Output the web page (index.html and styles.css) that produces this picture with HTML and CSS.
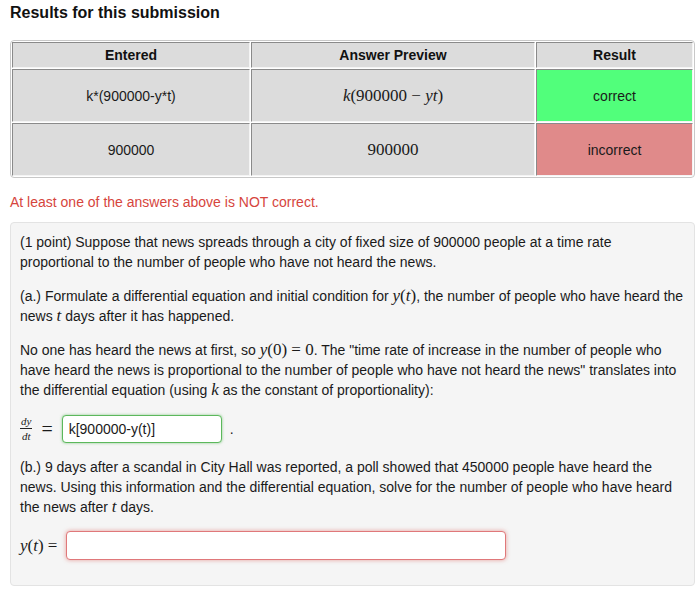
FILE: index.html
```html
<!DOCTYPE html>
<html lang="en">

<head>
  <meta charset="UTF-8" />
  <title>Results for this submission</title>
  <link rel="stylesheet" href="styles.css">
</head>

<body>

  <div class="page">
    <h3 class="results-title">Results for this submission</h3>

    <table class="attempt-results">
      <tr>
        <th class="col-entered">Entered</th>
        <th class="col-preview">Answer Preview</th>
        <th class="col-result">Result</th>
      </tr>
      <tr>
        <td>k*(900000-y*t)</td>
        <td class="math-cell"><span class="mi">k</span>(900000 &minus; <span class="mi">yt</span>)</td>
        <td class="result correct">correct</td>
      </tr>
      <tr>
        <td>900000</td>
        <td class="math-cell">900000</td>
        <td class="result incorrect">incorrect</td>
      </tr>
    </table>

    <p class="attempt-message">At least one of the answers above is NOT correct.</p>

    <div class="problem">
      <p>(1 point) Suppose that news spreads through a city of fixed size of 900000 people at a time rate
        proportional to the number of people who have not heard the news.</p>

      <p>(a.) Formulate a differential equation and initial condition for
        <span class="math"><span class="mi">y</span>(<span class="mi">t</span>)</span>, the number of people who have heard the
        news <span class="math mi">t</span> days after it has happened.</p>

      <p>No one has heard the news at first, so <span class="math"><span class="mi">y</span>(0) = 0</span>. The "time rate of increase in the number of people who
        have heard the news is proportional to the number of people who have not heard the news" translates into
        the differential equation (using <span class="math mi">k</span> as the constant of proportionality):</p>

      <div class="answer-row">
        <span class="frac">
          <span class="num">dy</span>
          <span class="den">dt</span>
        </span>
        <span class="math eq">=</span>
        <input type="text" class="answer answer-correct" value="k[900000-y(t)]" size="20">
        <span class="period">.</span>
      </div>

      <p>(b.) 9 days after a scandal in City Hall was reported, a poll showed that 450000 people have heard the
        news. Using this information and the differential equation, solve for the number of people who have heard
        the news after <span class="math mi">t</span> days.</p>

      <div class="answer-row">
        <span class="math"><span class="mi">y</span>(<span class="mi">t</span>) =</span>
        <input type="text" class="answer answer-wrong wide" value="">
      </div>
    </div>
  </div>

</body>

</html>
```

FILE: styles.css
```css
body {
  margin: 0;
  background-color: #fff;
  color: #1a1a1a;
  font-family: "Liberation Sans", Arial, sans-serif;
  font-size: 14px;
}

.page {
  padding: 3px 5px 8px 10px;
}

.results-title {
  margin: 0;
  font-size: 16px;
  line-height: 20px;
  font-weight: bold;
  color: #111;
}

.attempt-results {
  width: 685px;
  margin-top: 17px;
  border: 1px solid #c8c8c8;
  border-radius: 4px;
  border-spacing: 1px;
  background-color: #fff;
}

.attempt-results th,
.attempt-results td {
  background-color: #dcdcdc;
  text-align: center;
  border-style: solid;
  border-width: 1px;
  border-color: #8a8a8a #f4f4f4 #f4f4f4 #8a8a8a;
  padding: 2px 5px;
}

.attempt-results th {
  height: 20px;
  font-weight: bold;
  color: #111;
}

.attempt-results td {
  height: 47px;
  color: #1a1a1a;
}

.col-entered {
  width: 226px;
}

.col-preview {
  width: 272px;
}

.math-cell {
  font-family: "Liberation Serif", "Times New Roman", serif;
  font-size: 17px;
}

.result {
  color: #1c2a96;
}

.result.correct {
  background-color: #51ff7b;
}

.result.incorrect {
  background-color: #e08a8a;
}

.attempt-message {
  margin: 14px 0 10px;
  line-height: 20px;
  color: #d6453d;
}

.problem {
  background-color: #f5f5f5;
  border: 1px solid #e3e3e3;
  border-radius: 4px;
  padding: 9px 9px 11px;
}

.problem p {
  margin: 0 0 14px;
  line-height: 20px;
}

.math {
  font-family: "Liberation Serif", "Times New Roman", serif;
  font-size: 17px;
  line-height: 1;
}

.mi {
  font-style: italic;
}

.answer-row {
  display: flex;
  align-items: center;
  height: 29px;
  margin-bottom: 14px;
}

.frac {
  display: inline-flex;
  flex-direction: column;
  align-items: center;
  font-family: "Liberation Serif", "Times New Roman", serif;
  font-style: italic;
  font-size: 11px;
  line-height: 11px;
  margin-right: 9px;
}

.frac .num {
  border-bottom: 1px solid #222;
  padding: 0 1px 1px;
}

.frac .den {
  padding-top: 2px;
}

.eq {
  font-size: 20px;
  margin-right: 9px;
}

.answer {
  box-sizing: border-box;
  height: 28px;
  padding: 3px 6px;
  font-family: "Liberation Sans", Arial, sans-serif;
  font-size: 14px;
  color: #1a1a1a;
  background-color: #fff;
  border-radius: 4px;
  outline: none;
}

.answer-correct {
  width: 160px;
  border: 1px solid #5cb85c;
  box-shadow: 0 0 3px rgba(92, 184, 92, 0.7);
}

.answer-wrong {
  border: 1px solid #e0787a;
  box-shadow: 0 0 4px rgba(217, 83, 79, 0.55);
}

.answer-wrong.wide {
  width: 440px;
  height: 29px;
  margin-left: 9px;
}

.period {
  margin-left: 8px;
}
```
